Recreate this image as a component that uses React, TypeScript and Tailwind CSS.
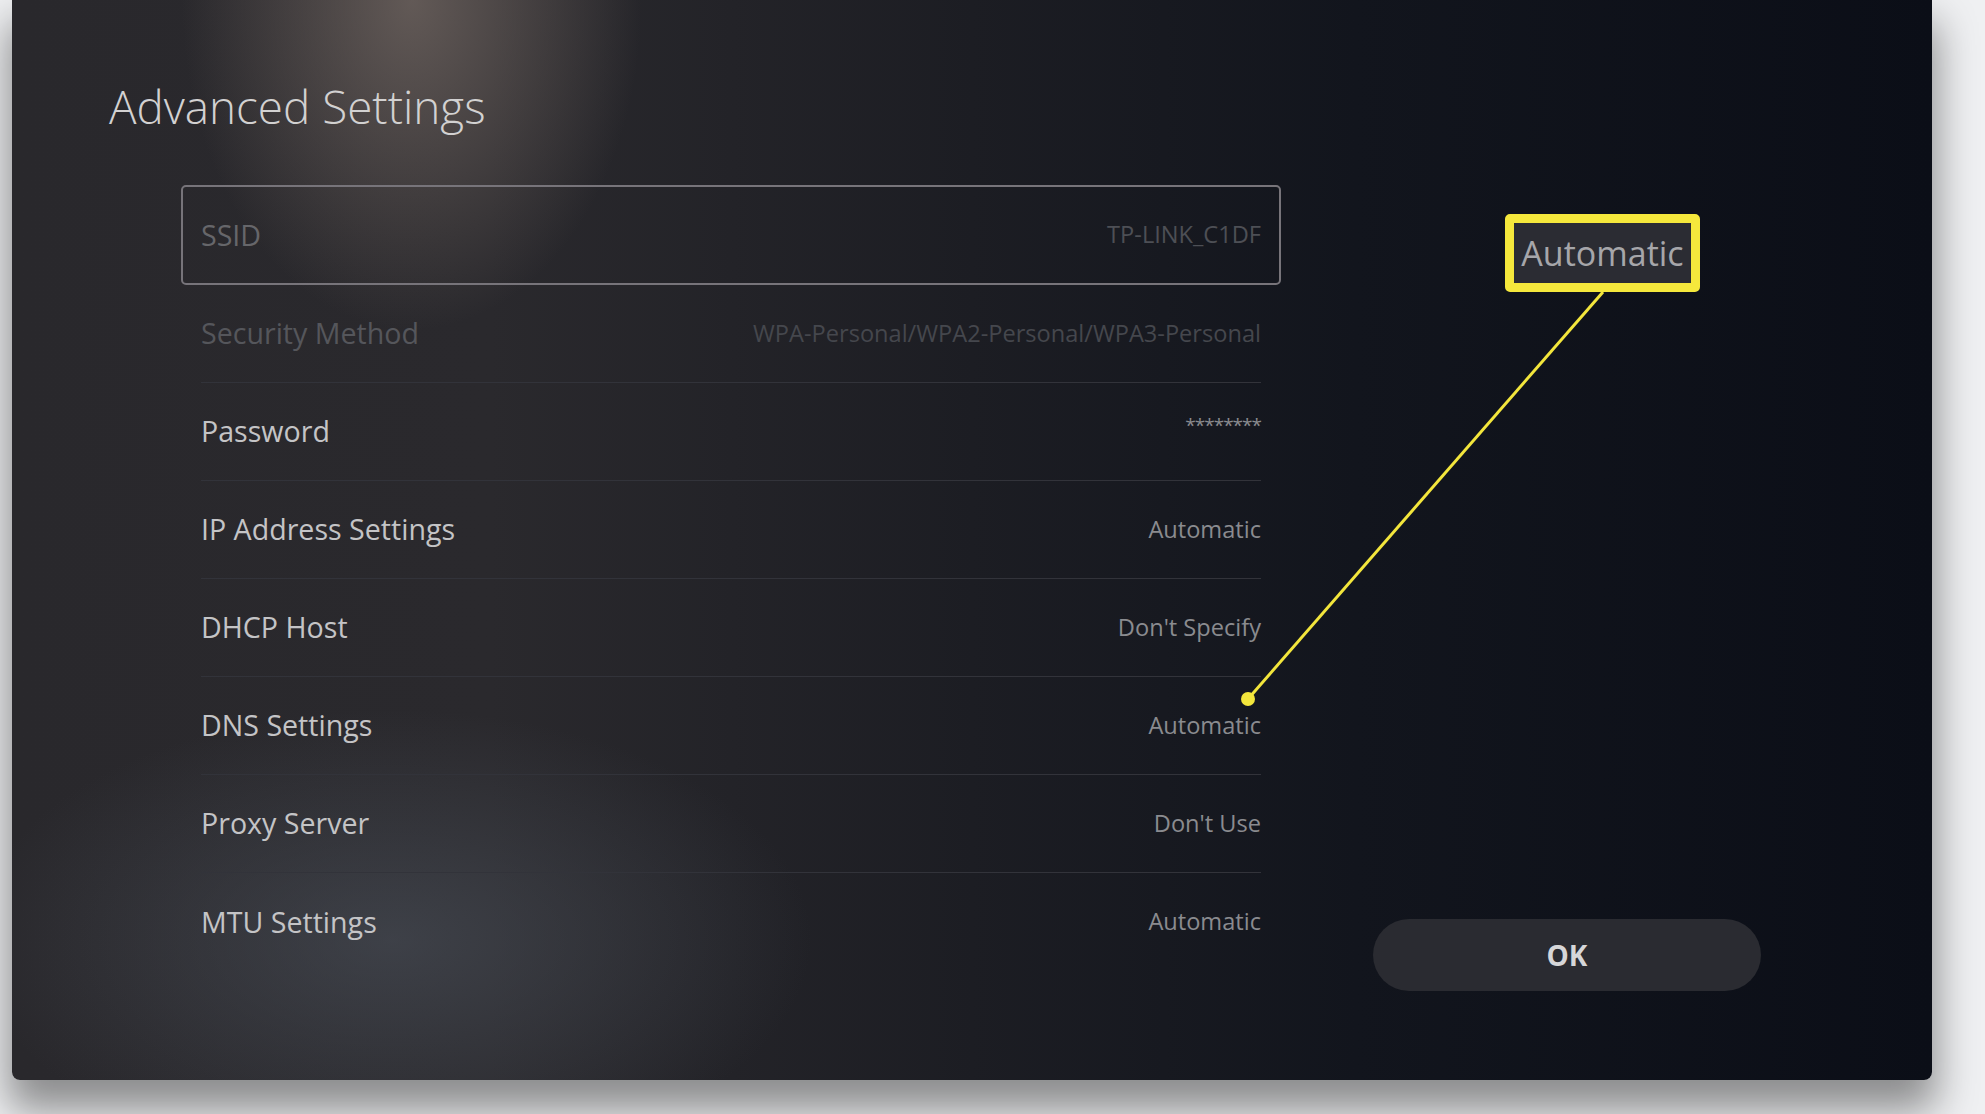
import React from "react";

type Item = { label: string; value: string; muted?: boolean };

const rows: Item[] = [
  { label: "Security Method", value: "WPA-Personal/WPA2-Personal/WPA3-Personal", muted: true },
  { label: "Password", value: "********" },
  { label: "IP Address Settings", value: "Automatic" },
  { label: "DHCP Host", value: "Don't Specify" },
  { label: "DNS Settings", value: "Automatic" },
  { label: "Proxy Server", value: "Don't Use" },
  { label: "MTU Settings", value: "Automatic" },
];

function Row({ item, last }: { item: Item; last: boolean }) {
  const isPassword = item.value.startsWith("*");
  return (
    <div
      className={`mx-[20px] flex h-[98px] items-center justify-between ${
        last ? "" : "border-b border-[#32333a]"
      }`}
    >
      <span className={`text-[28.6px] ${item.muted ? "text-[#55565b]" : "text-[#c4c4c6]"}`}>
        {item.label}
      </span>
      <span
        className={`${
          isPassword ? "text-[19px] tracking-[-1px] -mt-[12px]" : "text-[23.6px]"
        } ${item.muted ? "text-[#45474d]" : "text-[#8a8b8f]"}`}
      >
        {item.value}
      </span>
    </div>
  );
}

export default function App() {
  return (
    <div className="relative h-[1114px] w-full overflow-hidden bg-[#eff0f2] font-['Open_Sans',sans-serif]">
      {/* the console screen */}
      <div className="ml-[12px] flex h-[1080px] w-[1920px] overflow-hidden rounded-b-[8px] bg-[radial-gradient(ellipse_230px_330px_at_400px_0px,rgba(122,110,104,0.7),transparent),radial-gradient(ellipse_420px_230px_at_380px_940px,rgba(78,84,94,0.55),transparent),linear-gradient(90deg,#29282c_0%,#2a292d_25%,#1c1d23_50%,#12151d_70%,#0b0e17_100%)] shadow-[0_26px_40px_4px_rgba(0,0,0,0.42)]">
        <div className="flex w-[1269px] flex-col">
          <h1 className="pl-[97px] pt-[76px] text-[45.8px] font-light leading-[60px] text-[#d2d1d1]">
            Advanced Settings
          </h1>

          <div className="ml-[169px] mt-[49px] w-[1100px]">
            <div className="flex h-[100px] items-center justify-between rounded-[5px] border-2 border-[#77747a] px-[18px]">
              <span className="text-[28.6px] text-[#66666a]">SSID</span>
              <span className="text-[23.6px] text-[#4d4f55]">TP-LINK_C1DF</span>
            </div>
            {rows.map((r, i) => (
              <Row key={r.label} item={r} last={i === rows.length - 1} />
            ))}
          </div>
        </div>

        <div className="flex flex-1 flex-col justify-end pb-[89px] pl-[92px]">
          <button className="flex h-[72px] w-[388px] items-center justify-center rounded-full bg-[#2a2b31] text-[28px] font-bold text-[#d6d6d8]">
            OK
          </button>
        </div>
      </div>

      {/* callout annotation */}
      <svg className="pointer-events-none absolute left-0 top-0" width="1985" height="1114">
        <line x1="1603" y1="292" x2="1248" y2="699" stroke="#f3e63c" strokeWidth="3" />
        <circle cx="1248" cy="699" r="7" fill="#f3e63c" />
      </svg>
      <div className="absolute left-[1505px] top-[214px] flex h-[78px] w-[195px] items-center justify-center rounded-[5px] border-[9px] border-[#f5e83c] bg-[#2b2c33]">
        <span className="text-[34px] leading-none text-[#a6a6aa]">Automatic</span>
      </div>
    </div>
  );
}
